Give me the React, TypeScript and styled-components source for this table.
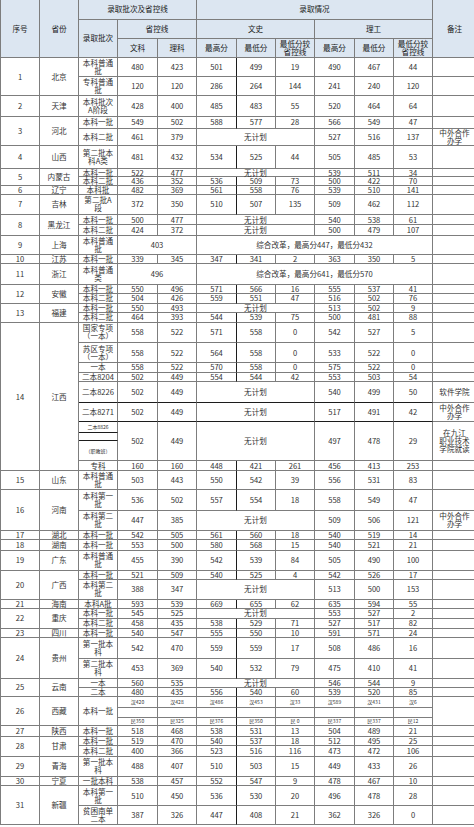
import React from "react";
import styled, { createGlobalStyle } from "styled-components";

const LINE = "#7d7d7d";
const DARK = "#1c1c1c";

const GlobalStyle = createGlobalStyle`
  html, body {
    margin: 0;
    padding: 0;
    background: #fff;
    overflow: hidden;
  }
  body {
    font-family: "Noto Sans CJK SC", "Noto Sans", sans-serif;
  }
`;

// column widths and row edges read off the sheet
const COLS = [39, 39, 39, 40, 39, 40, 39, 39, 40, 39, 39, 44];
const EDGES = [
  0, 19.5, 39, 58,
  76.5, 96, 117, 128.7, 146, 169, 177.5, 186, 195, 215, 225.5, 235.7, 255, 264,
  284.7, 294.3, 303.7, 313, 323, 343, 363.3, 372.7, 382.3, 402.7, 422, 433, 441,
  461.3, 471.3, 490.5, 511, 531, 540.3, 550.7, 571.3, 580, 600, 609, 619, 628.7,
  638, 658.7, 678.7, 688.3, 697.3, 708, 718, 726, 736.7, 745.7, 757, 777.3, 786.3,
  806.3, 825.5,
];

const Sheet = styled.div<{ $cols: string; $rows: string }>`
  display: grid;
  grid-template-columns: ${(p) => p.$cols};
  grid-template-rows: ${(p) => p.$rows};
  width: max-content;
  background: #fff;
  border-left: 1px solid ${LINE};
`;

const Cell = styled.div<{
  $head?: boolean;
  $tiny?: boolean;
  $dr?: boolean;
  $db?: boolean;
  $cs?: number;
  $rs?: number;
}>`
  grid-column: span ${(p) => p.$cs ?? 1};
  grid-row: span ${(p) => p.$rs ?? 1};
  box-sizing: border-box;
  min-height: 0;
  display: flex;
  align-items: center;
  justify-content: center;
  text-align: center;
  padding: 0 2px;
  background: ${(p) => (p.$head ? "#dce6f1" : "transparent")};
  border-right: 1px solid ${(p) => (p.$dr ? DARK : LINE)};
  border-bottom: 1px solid ${(p) => (p.$db ? DARK : LINE)};
  color: ${(p) => (p.$head ? "#1a1a1a" : "#333")};
  font-size: ${(p) => (p.$tiny ? "5px" : "7.6px")};
  line-height: ${(p) => (p.$tiny ? "6px" : "8px")};
  white-space: pre-line;
  word-break: break-all;
`;

type C = { t: string; cs?: number; rs?: number; tiny?: boolean; dr?: boolean; db?: boolean; head?: boolean };
type V = string | number;

const JOINT = "中外合作\n办学";

const c = (t: V, o: Partial<C> = {}): C => ({ t: String(t), ...o });
const h = (t: string, o: Partial<C> = {}): C => c(t, { ...o, head: true });
const vals = (...n: V[]): C[] => n.map((v, i) => c(v, { dr: i === 2 }));
const tinyVals = (n: string[]): C[] => n.map((v, i) => c(v, { dr: i === 2, tiny: true }));
const noPlan = (a: V, b: V, f: V, g: V, k: V): C[] => [c(a), c(b), c("无计划", { cs: 3 }), c(f), c(g), c(k)];
const reform = (s: V, t: string): C[] => [c(s, { cs: 2 }), c(t, { cs: 6 })];
const dark = (cells: C[]): C[] => cells.map((x) => ({ ...x, db: true }));
const one = (no: string, name: string, batch: string, rest: C[], note = ""): C[] => [
  c(no), c(name), c(batch), ...rest, c(note),
];
type Sub = [string, C[], string?];
const two = (no: string, name: string, a: Sub, b: Sub): C[] => [
  c(no, { rs: 2 }), c(name, { rs: 2 }),
  c(a[0]), ...a[1], c(a[2] ?? ""),
  c(b[0]), ...b[1], c(b[2] ?? ""),
];

const HEAD: C[] = [
  h("序号", { rs: 3 }), h("省份", { rs: 3 }), h("录取批次及省控线", { cs: 3 }), h("录取情况", { cs: 6 }), h("备注", { rs: 3 }),
  h("录取批次", { rs: 2 }), h("省控线", { cs: 2 }), h("文史", { cs: 3 }), h("理工", { cs: 3 }),
  h("文科"), h("理科"), h("最高分"), h("最低分"), h("最低分较省控线"), h("最高分"), h("最低分"), h("最低分较省控线"),
];

const BODY: C[] = [
  ...two("1", "北京", ["本科普通批", vals(480, 423, 501, 499, 19, 490, 467, 44)], ["专科普通批", vals(120, 120, 286, 264, 144, 241, 240, 120)]),
  ...one("2", "天津", "本科批次A阶段", vals(428, 400, 485, 483, 55, 520, 464, 64)),
  ...two("3", "河北", ["本科一批", vals(549, 502, 588, 577, 28, 566, 549, 47)], ["本科二批", noPlan(461, 379, 527, 516, 137), JOINT]),
  ...one("4", "山西", "第二批本科A类", vals(481, 432, 534, 525, 44, 505, 485, 53)),
  ...two("5", "内蒙古", ["本科一批", noPlan(522, 477, 539, 511, 34)], ["本科二批", vals(436, 352, 536, 509, 73, 500, 422, 70)]),
  ...one("6", "辽宁", "本科批", vals(482, 369, 561, 558, 76, 539, 510, 141)),
  ...one("7", "吉林", "第二批A段", vals(372, 350, 510, 507, 135, 509, 462, 112)),
  ...two("8", "黑龙江", ["本科一批", noPlan(500, 477, 540, 538, 61)], ["本科二批", noPlan(424, 372, 500, 479, 107)]),
  ...one("9", "上海", "本科普通批", reform(403, "综合改革，最高分447，最低分432")),
  ...one("10", "江苏", "本科一批", vals(339, 345, 347, 341, 2, 363, 350, 5)),
  ...one("11", "浙江", "本科普通类", reform(496, "综合改革，最高分641，最低分570")),
  ...two("12", "安徽", ["本科一批", vals(550, 496, 571, 566, 16, 555, 537, 41)], ["本科二批", vals(504, 426, 559, 551, 47, 516, 502, 76)]),
  ...two("13", "福建", ["本科一批", noPlan(550, 493, 513, 502, 9)], ["本科二批", vals(464, 393, 544, 539, 75, 500, 481, 88)]),
  c("14", { rs: 10 }), c("江西", { rs: 10 }),
  c("国家专项（一本）"), ...vals(558, 522, 571, 558, 0, 542, 527, 5), c(""),
  c("苏区专项（一本）"), ...vals(558, 522, 564, 558, 0, 533, 522, 0), c(""),
  c("一本"), ...vals(558, 522, 570, 558, 0, 575, 522, 0), c(""),
  c("二本8204"), ...vals(502, 449, 554, 544, 42, 553, 503, 54), c(""),
  ...dark([c("二本8226"), ...noPlan(502, 449, 540, 499, 50)]), c("软件学院"),
  ...dark([c("二本8271"), ...noPlan(502, 449, 517, 491, 42)]), c(JOINT),
  c("二本8826", { tiny: true, db: true }),
  c(502, { rs: 3 }), c(449, { rs: 3 }), c("无计划", { cs: 3, rs: 3 }),
  c(497, { rs: 3 }), c(478, { rs: 3 }), c(29, { rs: 3 }), c("在九江\n职业技术\n学院就读", { rs: 3 }),
  c("", { db: true }),
  c("（职教班）", { tiny: true }),
  c("专科"), ...vals(160, 160, 448, 421, 261, 456, 413, 253), c(""),
  ...one("15", "山东", "本科普通批", vals(503, 443, 550, 542, 39, 556, 531, 83)),
  ...two("16", "河南", ["本科第一批", vals(536, 502, 557, 554, 18, 558, 549, 47)], ["本科第二批", noPlan(447, 385, 509, 506, 121), JOINT]),
  ...one("17", "湖北", "本科一批", vals(542, 505, 561, 560, 18, 540, 519, 14)),
  ...one("18", "湖南", "本科一批", vals(553, 500, 580, 568, 15, 540, 521, 21)),
  ...one("19", "广东", "本科普通批", vals(455, 390, 542, 539, 84, 505, 490, 100)),
  ...two("20", "广西", ["本科一批", vals(521, 509, 540, 525, 4, 542, 526, 17)], ["本科第二批", noPlan(388, 347, 513, 500, 153)]),
  ...one("21", "海南", "本科A批", vals(593, 539, 669, 655, 62, 635, 594, 55)),
  ...two("22", "重庆", ["本科一批", noPlan(545, 525, 553, 527, 2)], ["本科二批", vals(458, 435, 538, 529, 71, 527, 517, 82)]),
  ...one("23", "四川", "本科一批", vals(540, 547, 555, 550, 10, 591, 571, 24)),
  ...two("24", "贵州", ["第一批本科", vals(542, 470, 559, 559, 17, 508, 486, 16)], ["第二批本科", vals(453, 369, 540, 532, 79, 475, 410, 41)]),
  ...two("25", "云南", ["一本", noPlan(560, 535, 546, 544, 9)], ["二本", vals(480, 435, 556, 540, 60, 539, 520, 85)]),
  c("26", { rs: 3 }), c("西藏", { rs: 3 }), c("本科一批", { rs: 3 }),
  ...tinyVals(["汉420", "汉428", "汉486", "汉453", "汉33", "汉589", "汉431", "汉6"]), c("", { rs: 3 }),
  ...vals("", "", "", "", "", "", "", ""),
  ...tinyVals(["民350", "民325", "民376", "民350", "民 0", "民337", "民337", "民12"]),
  ...one("27", "陕西", "本科一批", vals(518, 468, 538, 531, 13, 504, 489, 21)),
  ...two("28", "甘肃", ["本科一批", vals(519, 470, 540, 537, 18, 512, 495, 25)], ["本科二批", vals(400, 366, 523, 516, 116, 473, 472, 106)]),
  ...one("29", "青海", "第一批本科", vals(488, 407, 510, 503, 15, 449, 433, 26)),
  ...one("30", "宁夏", "一批本科", vals(538, 457, 552, 547, 9, 478, 467, 10)),
  ...two("31", "新疆", ["本科第一批", vals(510, 450, 536, 530, 20, 496, 478, 28)], ["贫困南单二本", vals(387, 326, 447, 408, 21, 362, 326, 0)]),
];

export default function App() {
  const cols = COLS.map((w) => `${w}px`).join(" ");
  const rows = EDGES.slice(1)
    .map((e, i) => `${(e - EDGES[i]).toFixed(2)}px`)
    .join(" ");

  return (
    <>
      <GlobalStyle />
      <Sheet $cols={cols} $rows={rows}>
        {[...HEAD, ...BODY].map((x, i) => (
          <Cell
            key={i}
            $head={x.head}
            $tiny={x.tiny}
            $dr={x.dr}
            $db={x.db}
            $cs={x.cs}
            $rs={x.rs}
          >
            {x.t}
          </Cell>
        ))}
      </Sheet>
    </>
  );
}
